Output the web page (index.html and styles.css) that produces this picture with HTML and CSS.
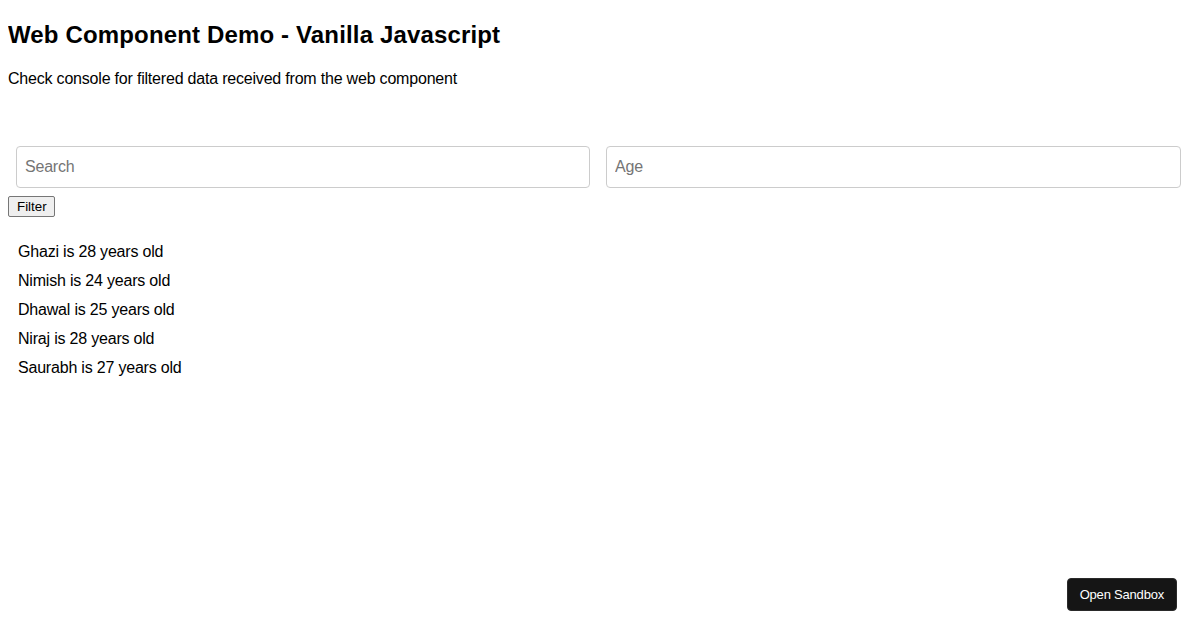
FILE: index.html
```html
<!DOCTYPE html>
<html>
<head>
<meta charset="utf-8">
<link rel="stylesheet" href="styles.css">
</head>
<body>
<h2 class="title">Web Component Demo - Vanilla Javascript</h2>
<p class="note">Check console for filtered data received from the web component</p>
<div class="component">
  <div class="fields">
    <input class="field" type="text" placeholder="Search">
    <input class="field" type="text" placeholder="Age">
  </div>
  <button class="filter-btn">Filter</button>
  <ul class="people">
    <li>Ghazi is 28 years old</li>
    <li>Nimish is 24 years old</li>
    <li>Dhawal is 25 years old</li>
    <li>Niraj is 28 years old</li>
    <li>Saurabh is 27 years old</li>
  </ul>
</div>
<button class="sandbox-btn">Open Sandbox</button>
</body>
</html>
```
FILE: styles.css
```css
html, body {
  background: #fff;
}
body {
  margin: 8px;
  font-family: "Liberation Sans", Arial, sans-serif;
  color: #000;
  font-size: 16px;
}
.title {
  font-size: 24px;
  font-weight: bold;
  margin: 13px 0 0 0;
  line-height: 28px;
  letter-spacing: 0.15px;
}
.note {
  margin: 21px 0 0 0;
  line-height: 18px;
  letter-spacing: -0.2px;
}
.component {
  margin-top: 58px;
}
.fields {
  display: flex;
  gap: 16px;
  padding: 0 11px 0 8px;
}
.field {
  flex: 1;
  min-width: 0;
  height: 42px;
  box-sizing: border-box;
  border: 1px solid #ccc;
  border-radius: 4px;
  padding: 0 8px;
  font-family: "Liberation Sans", Arial, sans-serif;
  font-size: 16px;
  letter-spacing: -0.2px;
  color: #000;
  outline: none;
}
.field:first-child {
  flex: 0 0 574px;
}
.field::placeholder {
  color: #757575;
}
.filter-btn {
  display: block;
  margin-top: 8px;
  font-family: "Liberation Sans", Arial, sans-serif;
  font-size: 13.33px;
  height: 21px;
  padding: 1px 7px 1px 8px;
  border: 1px solid #767676;
  border-radius: 2px;
  background: #efefef;
  color: #000;
}
.people {
  list-style: none;
  margin: 26px 0 0 0;
  padding: 0 0 0 10px;
  letter-spacing: -0.2px;
}
.people li {
  line-height: 18px;
  margin-bottom: 11px;
}
.sandbox-btn {
  position: fixed;
  right: 23px;
  bottom: 19px;
  height: 33px;
  padding: 0 12px;
  background: #151515;
  color: #fff;
  border: 1px solid #2a2a2a;
  border-radius: 4px;
  font-family: "Liberation Sans", Arial, sans-serif;
  font-size: 13px;
  letter-spacing: -0.2px;
}
```
